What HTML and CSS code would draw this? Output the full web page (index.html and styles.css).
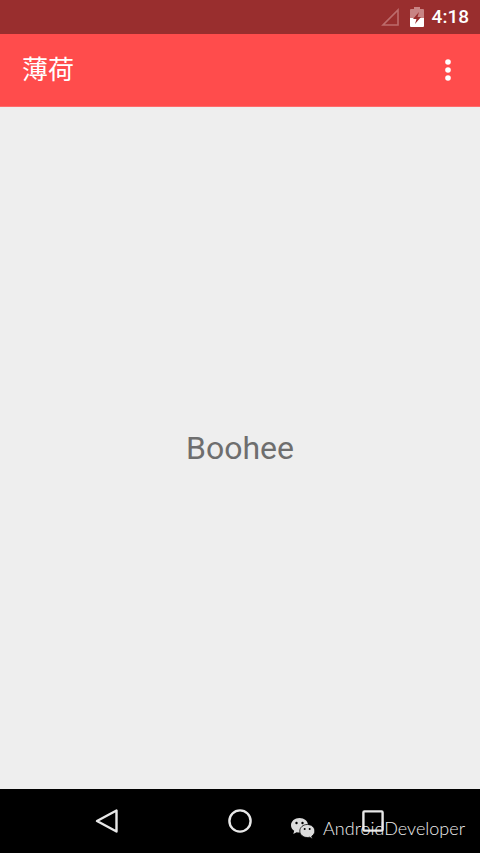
FILE: index.html
```html
<!DOCTYPE html>
<html lang="zh-CN">
<head>
    <meta charset="UTF-8">
    <meta name="viewport" content="width=device-width, initial-scale=1.0">
    <title>薄荷</title>
    <link rel="stylesheet" href="styles.css">
</head>
<body>
    <div class="status-bar">
        <svg class="signal" width="20" height="20" viewBox="0 0 20 20" aria-hidden="true">
            <path d="M3 18H18V3Z" fill="none" stroke="#bd6c6c" stroke-width="1.6"/>
        </svg>
        <svg class="battery" width="14" height="20" viewBox="0 0 14 20" aria-hidden="true">
            <path d="M4 0h6v2h3q1 0 1 1v8H0V3q0-1 1-1h3z" fill="#c88484"/>
            <path d="M0 11h14v8q0 1-1 1H1q-1 0-1-1z" fill="#fff"/>
            <path d="M9 5L3 12h3.500L5 17l6-7H7.500z" fill="#992e2e"/>
        </svg>
        <span class="clock">4:18</span>
    </div>

    <header class="toolbar">
        <h1>薄荷</h1>
        <button class="menu-button" type="button" aria-label="More options">
            <svg width="6" height="22" viewBox="0 0 6 22" aria-hidden="true">
                <circle cx="3" cy="3" r="2.8" fill="#fff"/>
                <circle cx="3" cy="11" r="2.8" fill="#fff"/>
                <circle cx="3" cy="19" r="2.8" fill="#fff"/>
            </svg>
        </button>
    </header>

    <main class="content">
        <p>Boohee</p>
    </main>

    <nav class="nav-bar">
        <button type="button" aria-label="Back">
            <svg width="26" height="26" viewBox="0 0 26 26" aria-hidden="true">
                <path d="M22.5 2.5v21L3 13z" fill="none" stroke="#e8e8e8" stroke-width="2.4" stroke-linejoin="round"/>
            </svg>
        </button>
        <button type="button" aria-label="Home">
            <svg width="26" height="26" viewBox="0 0 26 26" aria-hidden="true">
                <circle cx="13" cy="13" r="10.6" fill="none" stroke="#e8e8e8" stroke-width="2.4"/>
            </svg>
        </button>
        <button type="button" aria-label="Recent apps">
            <svg width="26" height="26" viewBox="0 0 26 26" aria-hidden="true">
                <rect x="3.4" y="3.4" width="19.2" height="19.2" rx="1" fill="none" stroke="#e8e8e8" stroke-width="2.4"/>
            </svg>
        </button>
        <div class="watermark">
            <svg width="24" height="21" viewBox="0 0 24 21" aria-hidden="true">
                <path d="M8.5 0C3.8 0 0 3.2 0 7.2c0 2.3 1.3 4.3 3.2 5.6L2.3 16l3.3-1.8q1.4.4 2.9.4c4.7 0 8.5-3.3 8.5-7.4S13.2 0 8.500 0z" fill="#dcdcdc"/>
                <circle cx="5.5" cy="5" r="1.2" fill="#000"/>
                <circle cx="11.5" cy="5" r="1.2" fill="#000"/>
                <path d="M16.3 6.5c-4.2 0-7.5 2.9-7.5 6.5s3.3 6.5 7.5 6.5q1.2 0 2.4-.3L21.5 21l-.8-2.8c1.9-1.2 3.1-3.1 3.1-5.2 0-3.600-3.300-6.500-7.500-6.500z" fill="#dcdcdc" stroke="#000" stroke-width="0.8"/>
                <circle cx="13.7" cy="11" r="1" fill="#000"/>
                <circle cx="18.7" cy="11" r="1" fill="#000"/>
            </svg>
            <span>AndroidDeveloper</span>
        </div>
    </nav>
</body>
</html>
```

FILE: styles.css
```css
body {
    margin: 0;
    min-height: 100vh;
    display: flex;
    flex-direction: column;
    font-family: Roboto, 'Noto Sans CJK SC', sans-serif;
    background-color: #eee;
}

button {
    padding: 0;
    border: none;
    background: none;
    cursor: pointer;
}

svg {
    display: block;
}

.status-bar {
    display: flex;
    justify-content: flex-end;
    align-items: center;
    height: 34px;
    padding: 0 11px;
    background-color: #992e2e;
    color: #fff;
}

.battery {
    margin: 0 8px 0 10px;
}

.clock {
    font-size: 19px;
    font-weight: 500;
    line-height: 34px;
}

.toolbar {
    display: flex;
    justify-content: space-between;
    align-items: center;
    height: 72px;
    padding: 0 8px 0 22px;
    border-bottom: 1px solid #ff6b6b;
    background-color: #ff4c4c;
    color: #fff;
}

.toolbar h1 {
    margin: 0;
    font-size: 26px;
    font-weight: 400;
    line-height: 36px;
}

.menu-button {
    display: flex;
    justify-content: center;
    align-items: center;
    width: 48px;
    height: 48px;
}

.content {
    flex: 1;
    display: flex;
    justify-content: center;
    align-items: center;
}

.content p {
    margin: 0;
    font-size: 32px;
    line-height: 36px;
    color: #6e6e6e;
}

.nav-bar {
    position: relative;
    display: flex;
    height: 64px;
    padding: 0 40px;
    background-color: #000;
}

.nav-bar button {
    flex: 1;
    display: flex;
    justify-content: center;
    align-items: center;
}

/* sits over the navigation buttons */
.watermark {
    position: absolute;
    right: 15px;
    bottom: 14px;
    display: flex;
    align-items: center;
    gap: 8px;
    font-family: Lato, sans-serif;
    font-size: 18px;
    font-weight: 300;
    line-height: 22px;
    color: #eee;
    pointer-events: none;
}
```
